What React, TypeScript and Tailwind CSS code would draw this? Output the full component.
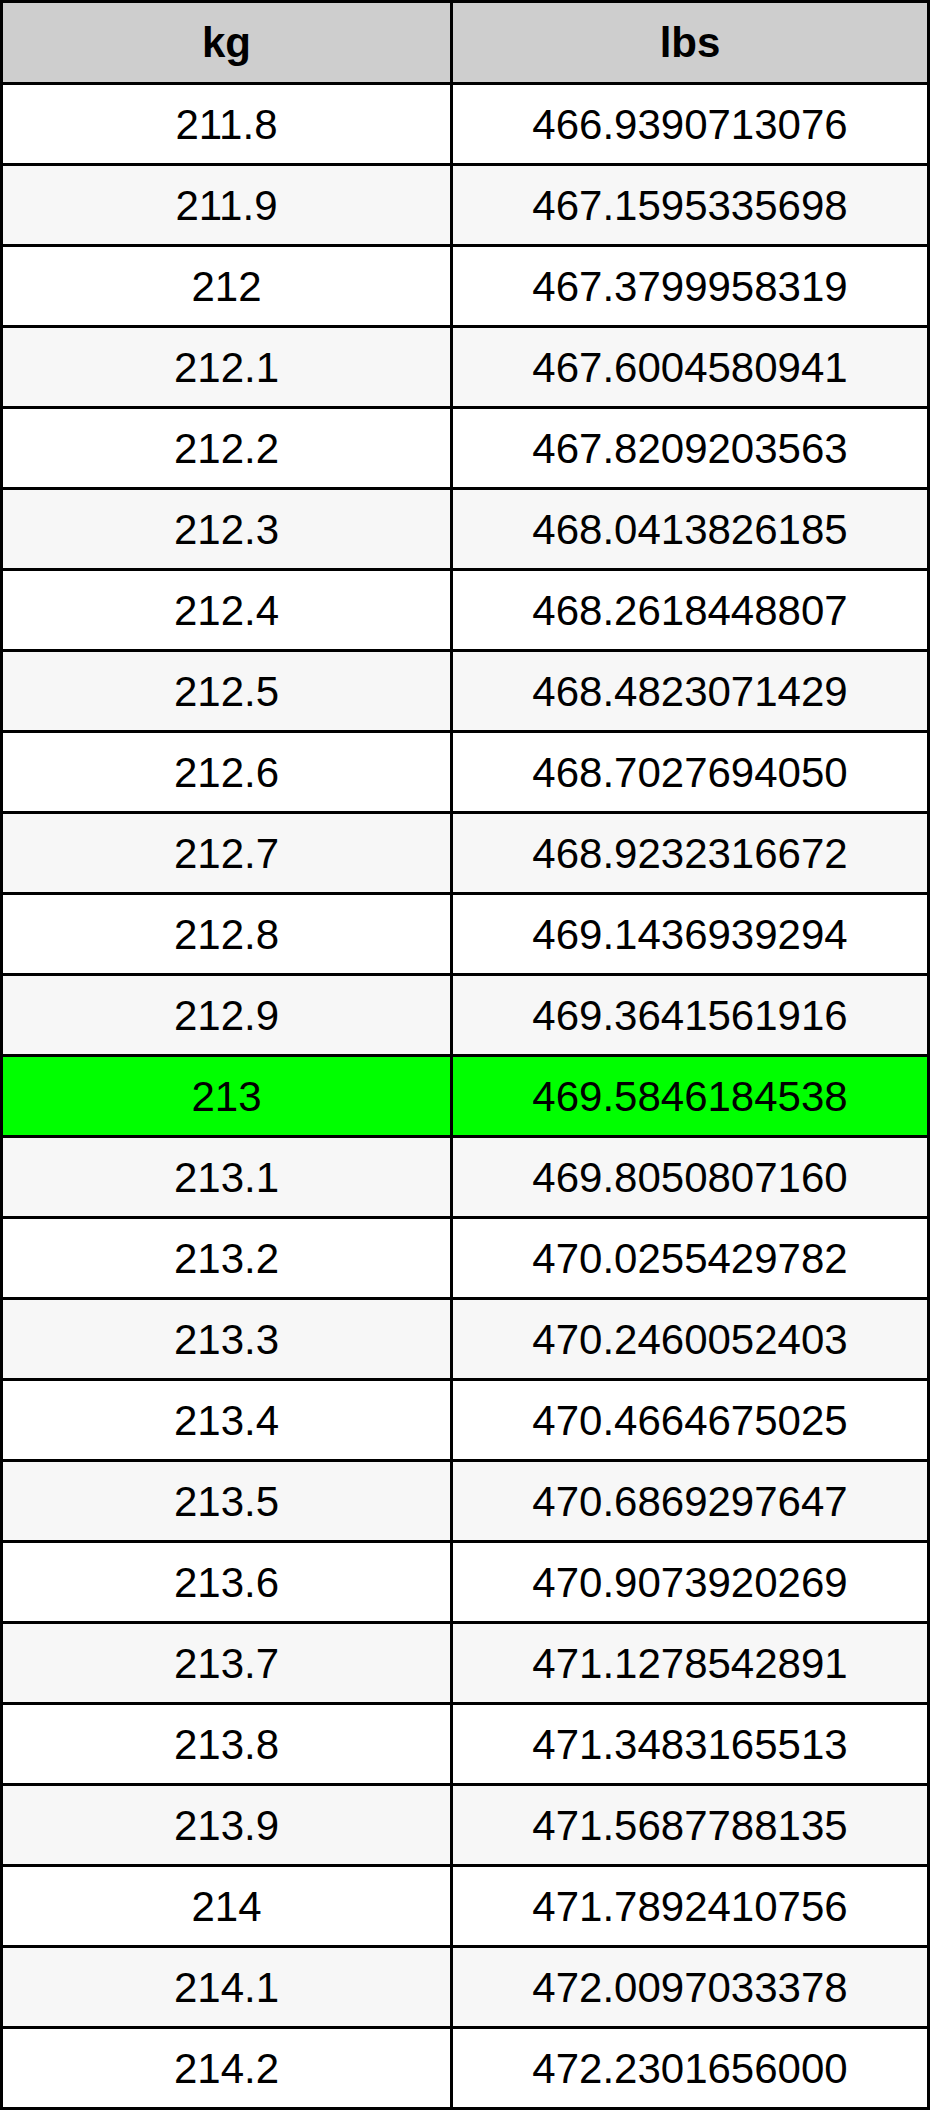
const rows: [string, string][] = [
  ["211.8", "466.9390713076"],
  ["211.9", "467.1595335698"],
  ["212", "467.3799958319"],
  ["212.1", "467.6004580941"],
  ["212.2", "467.8209203563"],
  ["212.3", "468.0413826185"],
  ["212.4", "468.2618448807"],
  ["212.5", "468.4823071429"],
  ["212.6", "468.7027694050"],
  ["212.7", "468.9232316672"],
  ["212.8", "469.1436939294"],
  ["212.9", "469.3641561916"],
  ["213", "469.5846184538"],
  ["213.1", "469.8050807160"],
  ["213.2", "470.0255429782"],
  ["213.3", "470.2460052403"],
  ["213.4", "470.4664675025"],
  ["213.5", "470.6869297647"],
  ["213.6", "470.9073920269"],
  ["213.7", "471.1278542891"],
  ["213.8", "471.3483165513"],
  ["213.9", "471.5687788135"],
  ["214", "471.7892410756"],
  ["214.1", "472.0097033378"],
  ["214.2", "472.2301656000"],
];

export default function App() {
  return (
    <div className="min-h-[2115px] w-[930px] bg-white font-['Liberation_Sans',Arial,sans-serif] text-[42px] text-black">
      <div className="grid grid-cols-[447px_474px] gap-[3px] bg-black p-[3px]">
        <div className="flex h-[79px] items-center justify-center bg-[#cecece] font-bold">kg</div>
        <div className="flex h-[79px] items-center justify-center bg-[#cecece] font-bold">lbs</div>
        {rows.map(([kg, lbs], i) => {
          const bg = kg === "213" ? "bg-[#00ff00]" : i % 2 === 0 ? "bg-white" : "bg-[#f7f7f7]";
          return (
            <div key={kg} className="contents">
              <div className={`flex h-[78px] items-center justify-center ${bg}`}>{kg}</div>
              <div className={`flex h-[78px] items-center justify-center ${bg}`}>{lbs}</div>
            </div>
          );
        })}
      </div>
    </div>
  );
}
